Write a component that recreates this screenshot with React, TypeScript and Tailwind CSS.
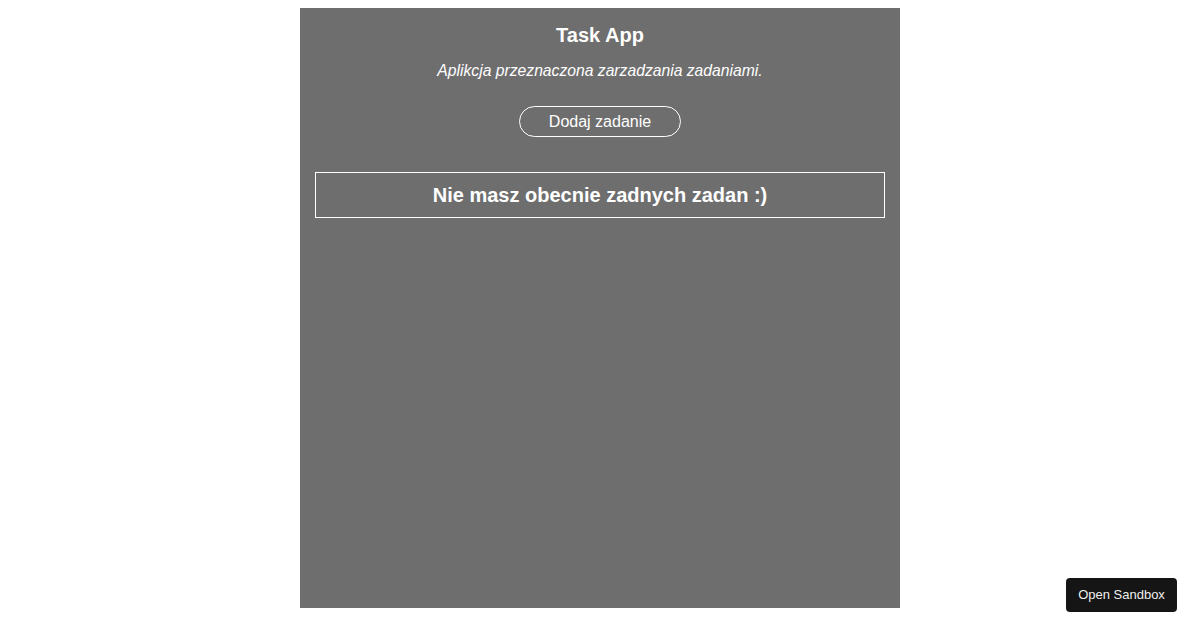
export default function App() {
  return (
    <div className="min-h-[630px] bg-white pt-2 font-['Liberation_Sans',Arial,sans-serif]">
      <div className="mx-auto flex h-[600px] w-[600px] flex-col items-center bg-[#6e6e6e] px-[15px] pt-[13px] text-white">
        <h1 className="text-[20px] font-bold leading-[28px]">Task App</h1>
        <p className="mt-[10px] text-[15.7px] italic leading-[24px]">Aplikcja przeznaczona zarzadzania zadaniami.</p>
        <button className="mt-[23px] h-[31px] w-[162px] rounded-full border border-white text-[16px] leading-none text-white">
          Dodaj zadanie
        </button>
        <div className="mt-[35px] flex h-[46px] w-full items-center justify-center border border-white">
          <h2 className="text-[20px] font-bold leading-none">Nie masz obecnie zadnych zadan :)</h2>
        </div>
      </div>
      <button className="fixed bottom-[18px] right-[23px] h-[34px] w-[111px] rounded-[4px] bg-[#151515] text-[13px] text-[#eeeeee]">
        Open Sandbox
      </button>
    </div>
  );
}
